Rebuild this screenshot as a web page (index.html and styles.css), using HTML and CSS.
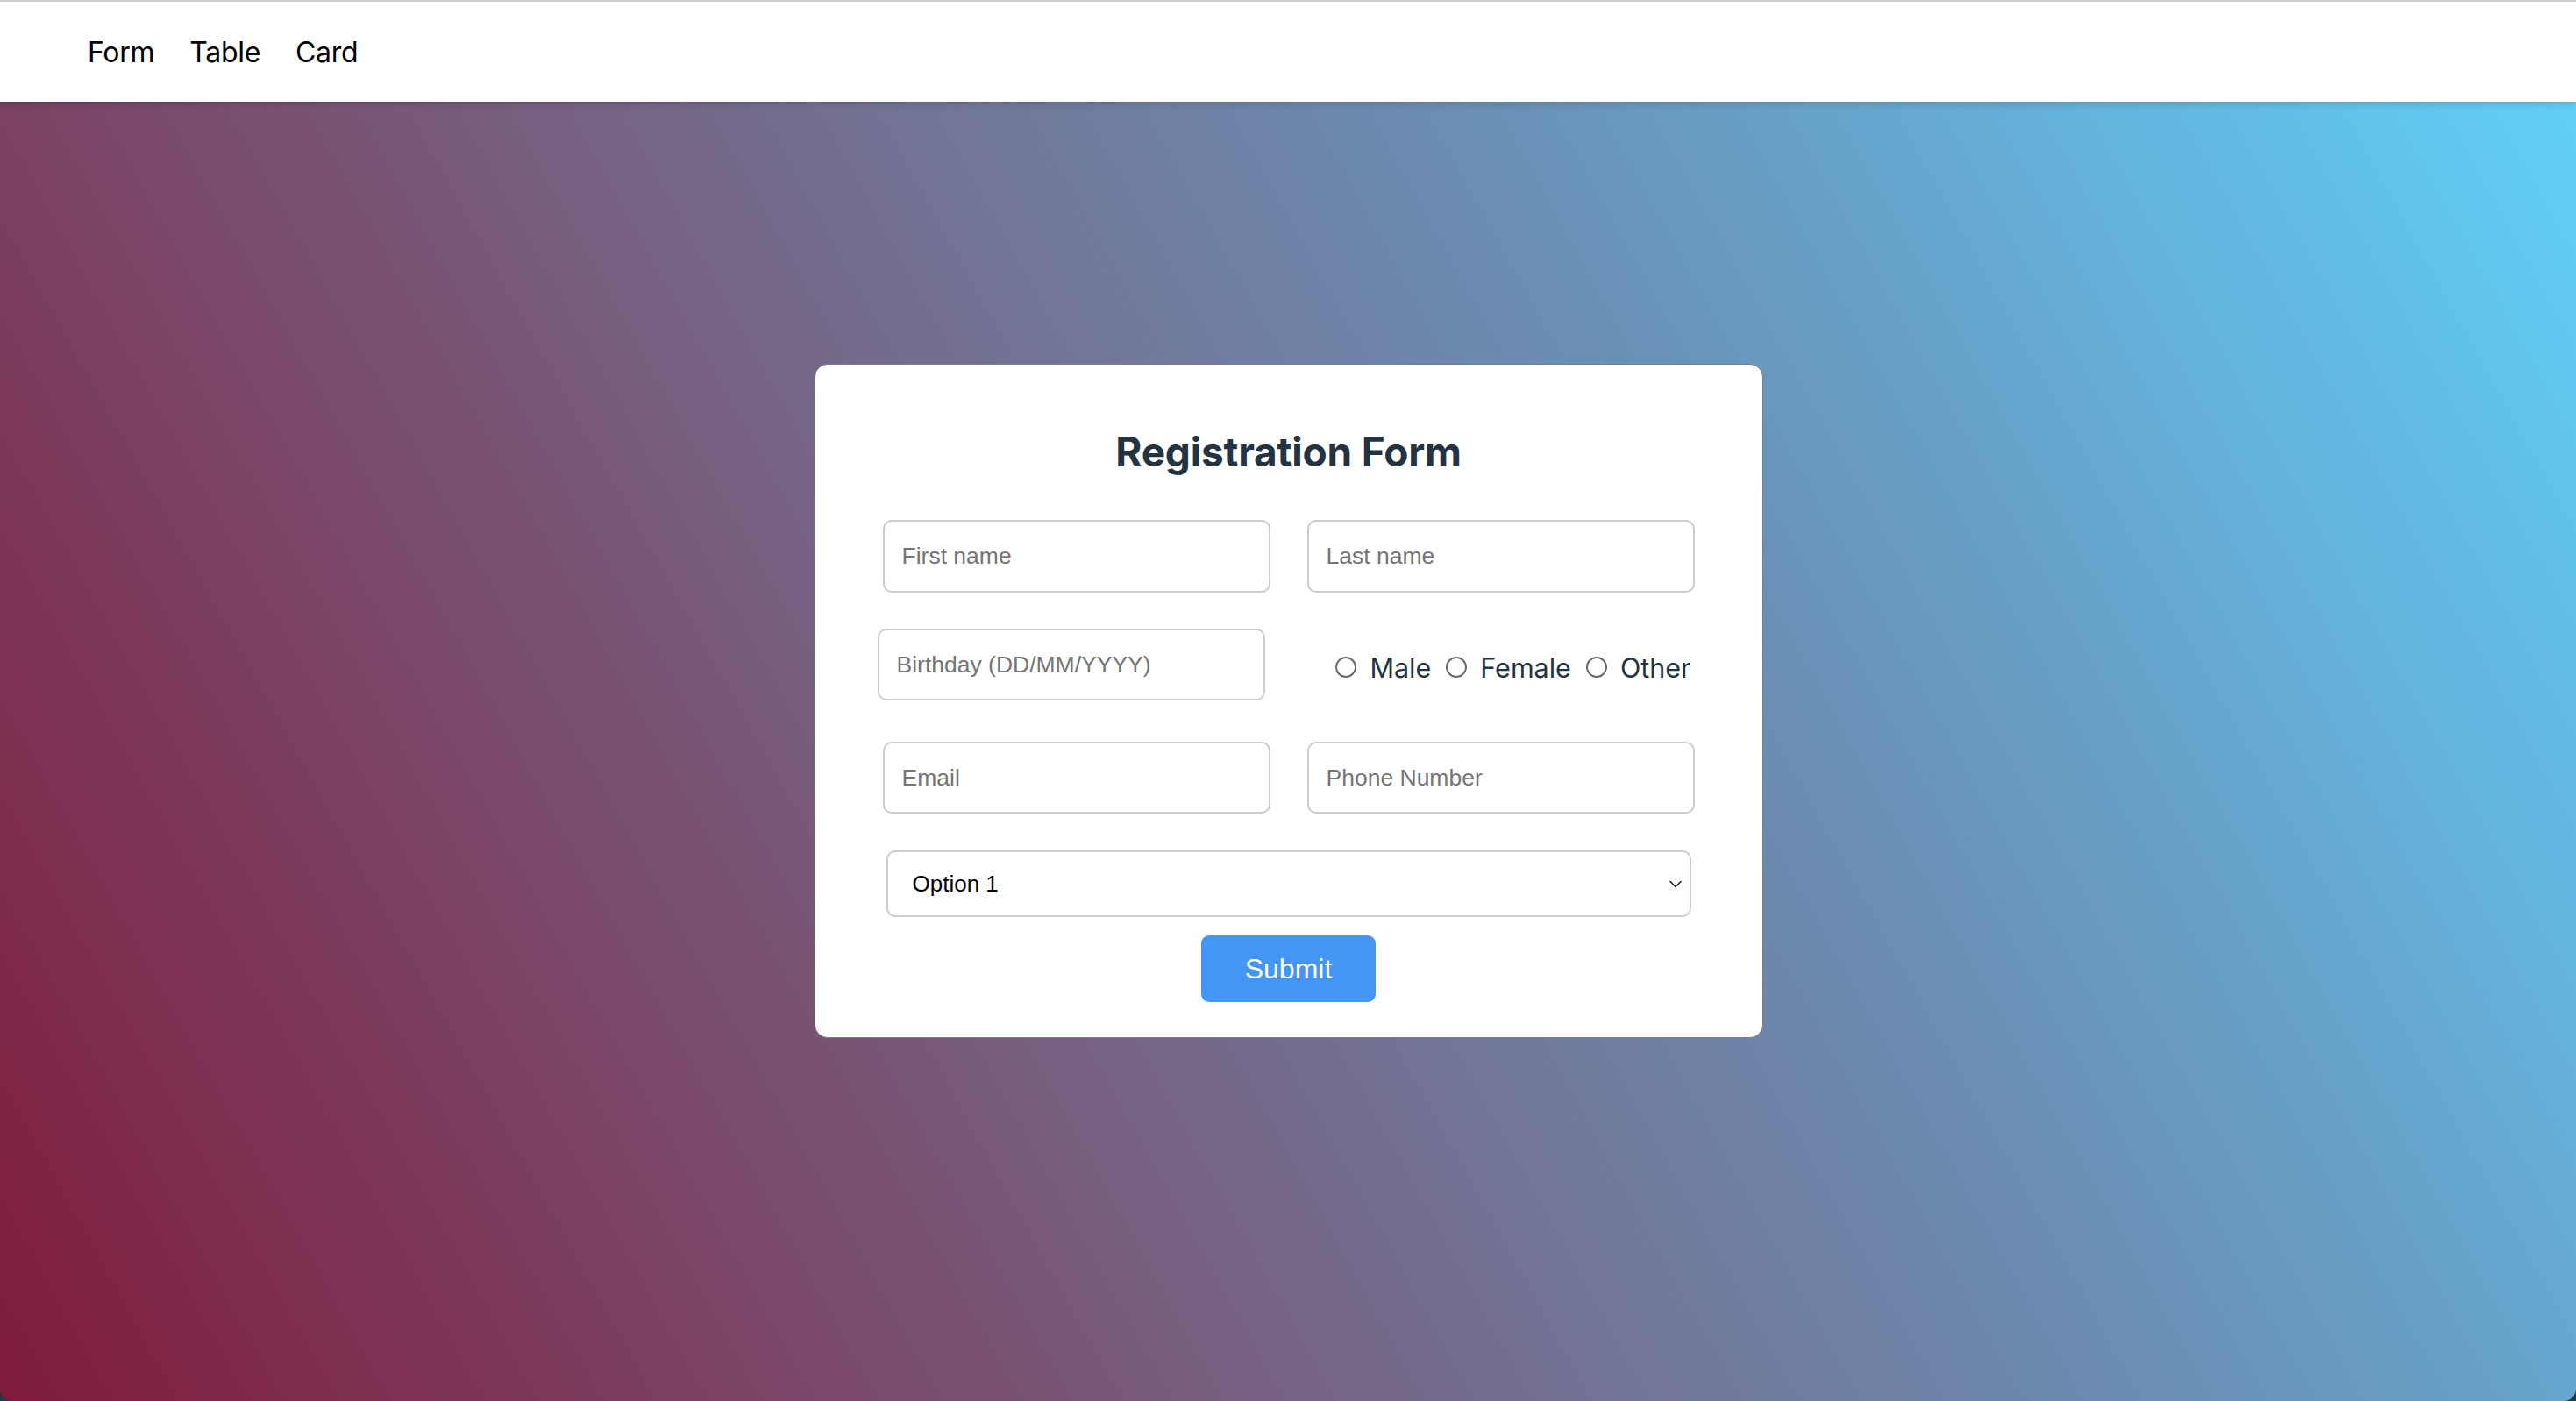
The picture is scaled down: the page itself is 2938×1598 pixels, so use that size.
FILE: index.html
```html
<!DOCTYPE html>
<html lang="en">
<head>
<meta charset="utf-8">
<title>Registration Form</title>
<link rel="stylesheet" href="styles.css">
</head>
<body>
<nav class="navbar">
  <a class="nav-link" href="#">Form</a>
  <a class="nav-link" href="#">Table</a>
  <a class="nav-link" href="#">Card</a>
</nav>
<main class="main">
  <form class="card">
    <h1 class="card-title">Registration Form</h1>
    <div class="row row-first">
      <input class="field" type="text" placeholder="First name">
      <input class="field" type="text" placeholder="Last name">
    </div>
    <div class="row row-second">
      <input class="field field-birthday" type="text" placeholder="Birthday (DD/MM/YYYY)">
      <div class="radio-group">
        <label class="radio"><span class="radio-circle"></span>Male</label>
        <label class="radio"><span class="radio-circle"></span>Female</label>
        <label class="radio"><span class="radio-circle"></span>Other</label>
      </div>
    </div>
    <div class="row row-third">
      <input class="field" type="email" placeholder="Email">
      <input class="field" type="tel" placeholder="Phone Number">
    </div>
    <div class="select-wrap">
      <select class="select">
        <option>Option 1</option>
        <option>Option 2</option>
        <option>Option 3</option>
      </select>
      <svg class="chevron" width="14" height="9" viewBox="0 0 14 9" aria-hidden="true"><path d="M1 1.5 L7 7.5 L13 1.5" fill="none" stroke="#222" stroke-width="1.6" stroke-linecap="round" stroke-linejoin="round"/></svg>
    </div>
    <button class="submit" type="button">Submit</button>
  </form>
</main>
</body>
</html>
```
FILE: styles.css
```css
* { box-sizing: border-box; }

html, body {
  margin: 0;
  padding: 0;
  height: 100%;
}

body {
  background: #23394a;
  font-family: Inter, "Liberation Sans", sans-serif;
  overflow: hidden;
}

.navbar {
  height: 116px;
  background: #ffffff;
  border-top: 2px solid #cdcdcd;
  display: flex;
  align-items: center;
  gap: 40px;
  padding-left: 100px;
  position: relative;
  z-index: 2;
  box-shadow: 0 2px 8px rgba(0, 0, 0, 0.18);
}

.nav-link {
  font-family: Inter, "Liberation Sans", sans-serif;
  font-size: 32px;
  color: #000000;
  text-decoration: none;
  line-height: 39px;
  letter-spacing: -0.3px;
}

.main {
  height: 1482px;
  background: linear-gradient(61deg, #801b3c 0%, #7a4d6e 28%, #746d8e 45%, #6a92b8 68%, #63b5de 86%, #60cff7 100%);
  border-bottom-left-radius: 14px;
  border-bottom-right-radius: 14px;
  display: flex;
  flex-direction: column;
  align-items: center;
  padding-top: 299px;
}

.card {
  width: 1082px;
  background: #ffffff;
  border: 1px solid #7e7e7e;
  border-radius: 15px;
  padding: 72px 77px 40px;
  display: flex;
  flex-direction: column;
  margin-left: 1px;
}

.card-title {
  margin: 0 0 50px;
  font-family: Inter, "Liberation Sans", sans-serif;
  font-weight: 700;
  font-size: 46px;
  line-height: 55px;
  color: #243342;
  text-align: center;
  letter-spacing: -0.2px;
}

.row {
  display: flex;
  align-items: center;
  justify-content: space-between;
}

.row-second {
  margin-top: 41px;
}

.row-third {
  margin-top: 47px;
}

.field {
  width: 442px;
  height: 83px;
  border: 2px solid #cccccc;
  border-radius: 10px;
  padding: 0 20px;
  font-family: "Liberation Sans", Arial, sans-serif;
  font-size: 26.5px;
  color: #222222;
  background: #ffffff;
  outline: none;
}

.row-second .field,
.row-third .field {
  height: 82px;
}

.field::placeholder {
  color: #757575;
}

.field-birthday {
  margin-left: -6px;
}

.radio-group {
  display: flex;
  align-items: center;
  margin-right: 4px;
  margin-top: 6px;
}

.radio {
  display: flex;
  align-items: center;
  font-family: Inter, "Liberation Sans", sans-serif;
  font-size: 30.5px;
  color: #243342;
  margin-left: 17px;
}

.radio:first-child {
  margin-left: 0;
}

.radio-circle {
  width: 24px;
  height: 24px;
  border: 2px solid #6a6a6a;
  border-radius: 50%;
  margin-right: 15px;
  background: #ffffff;
}

.select-wrap {
  position: relative;
  margin-top: 42px;
  margin-left: 4px;
  margin-right: 4px;
}

.select {
  display: block;
  width: 100%;
  height: 76px;
  border: 2px solid #cccccc;
  border-radius: 10px;
  padding: 0 28px;
  font-family: "Liberation Sans", Arial, sans-serif;
  font-size: 26px;
  color: #000000;
  background: #ffffff;
  appearance: none;
  -webkit-appearance: none;
  outline: none;
}

.chevron {
  position: absolute;
  right: 11px;
  top: 34px;
  pointer-events: none;
}

.submit {
  align-self: center;
  margin-top: 21px;
  width: 199px;
  height: 76px;
  border: none;
  border-radius: 9px;
  background: #4496f5;
  color: #ffffff;
  font-family: "Liberation Sans", Arial, sans-serif;
  font-size: 32px;
  padding-top: 2px;
  cursor: pointer;
}
```
